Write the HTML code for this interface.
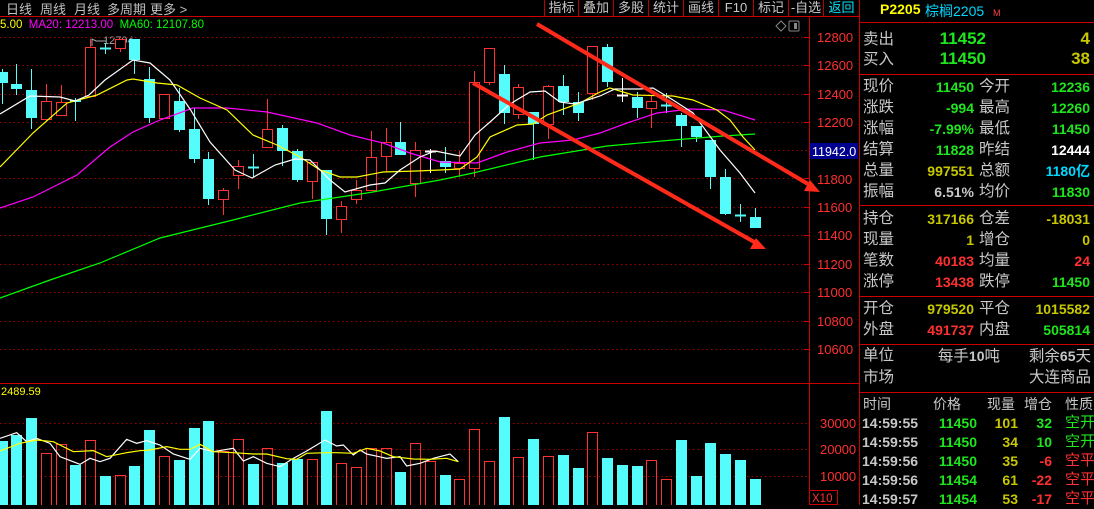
<!DOCTYPE html>
<html><head><meta charset="utf-8">
<style>
*{margin:0;padding:0;box-sizing:border-box}
body{width:1094px;height:505px;background:#000;overflow:hidden;position:relative;font-family:"Liberation Sans","Noto Sans CJK SC",sans-serif;color:#c8c8c8}
.a{position:absolute;white-space:nowrap}
.m{font-size:13px;color:#c0c0c0;top:-1px}
.tab{position:absolute;top:0;height:16px;border-left:1px solid #b00;font-size:13px;line-height:15px;text-align:center;color:#c8c8c8}
.lbl{position:absolute;left:863px;font-size:15.5px;color:#c8c8c8;line-height:20px}
.lbl2{position:absolute;left:979px;font-size:15.5px;color:#c8c8c8;line-height:20px}
.v{position:absolute;font-size:14px;font-weight:bold;line-height:20px;text-align:right}
.hl{position:absolute;left:859px;width:235px;height:1px;background:#c00}
.g{color:#1ee61e}.y{color:#c8c800}.r{color:#ff3030}.w{color:#fff}.c{color:#00d8ff}.gr{color:#c8c8c8}
</style></head><body>
<div class="a m" style="left:6px">日线</div>
<div class="a m" style="left:40px">周线</div>
<div class="a m" style="left:74px">月线</div>
<div class="a m" style="left:107px">多周期</div>
<div class="a m" style="left:150px">更多 &gt;</div>
<div class="tab" style="left:544px;width:34px">指标</div>
<div class="tab" style="left:578px;width:35px">叠加</div>
<div class="tab" style="left:613px;width:35px">多股</div>
<div class="tab" style="left:648px;width:35px">统计</div>
<div class="tab" style="left:683px;width:35px">画线</div>
<div class="tab" style="left:718px;width:35px">F10</div>
<div class="tab" style="left:753px;width:35px">标记</div>
<div class="tab" style="left:788px;width:35px">-自选</div>
<div class="tab" style="left:823px;width:36px;color:#00e8ff">返回</div>
<div class="a" style="left:0;top:16px;width:859px;height:1px;background:#c00"></div>
<div class="a" style="left:0;top:17px;font-size:11.5px;line-height:16px"><span style="color:#ff0">5.00</span>&nbsp; <span style="color:#f0f">MA20: 12213.00</span>&nbsp; <span style="color:#0f0">MA60: 12107.80</span></div>
<div class="a" style="left:103px;top:35px;font-size:11px;color:#aaa">12794</div>

<svg class="a" style="left:0;top:0" width="860" height="505">
<g stroke="#a00000" stroke-dasharray="1.5,3" stroke-width="1">
<line x1="0" x2="809" y1="37.5" y2="37.5"/><line x1="0" x2="809" y1="65.5" y2="65.5"/><line x1="0" x2="809" y1="94.5" y2="94.5"/><line x1="0" x2="809" y1="122.5" y2="122.5"/><line x1="0" x2="809" y1="150.5" y2="150.5"/><line x1="0" x2="809" y1="178.5" y2="178.5"/><line x1="0" x2="809" y1="207.5" y2="207.5"/><line x1="0" x2="809" y1="235.5" y2="235.5"/><line x1="0" x2="809" y1="264.5" y2="264.5"/><line x1="0" x2="809" y1="292.5" y2="292.5"/><line x1="0" x2="809" y1="321.5" y2="321.5"/><line x1="0" x2="809" y1="349.5" y2="349.5"/>
<line x1="0" x2="809" y1="423.5" y2="423.5"/><line x1="0" x2="809" y1="449.5" y2="449.5"/><line x1="0" x2="809" y1="476.5" y2="476.5"/>
</g>
<line x1="809.5" y1="17" x2="809.5" y2="505" stroke="#c00"/>
<line x1="0" y1="383.5" x2="859" y2="383.5" stroke="#c00"/>
<line x1="859.5" y1="0" x2="859.5" y2="505" stroke="#c00"/>
<g stroke="#c00"><line x1="804" x2="809" y1="37.5" y2="37.5"/><line x1="804" x2="809" y1="65.5" y2="65.5"/><line x1="804" x2="809" y1="94.5" y2="94.5"/><line x1="804" x2="809" y1="122.5" y2="122.5"/><line x1="804" x2="809" y1="178.5" y2="178.5"/><line x1="804" x2="809" y1="207.5" y2="207.5"/><line x1="804" x2="809" y1="235.5" y2="235.5"/><line x1="804" x2="809" y1="264.5" y2="264.5"/><line x1="804" x2="809" y1="292.5" y2="292.5"/><line x1="804" x2="809" y1="321.5" y2="321.5"/><line x1="804" x2="809" y1="349.5" y2="349.5"/></g>
<g fill="#ff3030" font-size="13" font-family="Liberation Sans">
<text x="817" y="42">12800</text><text x="817" y="70">12600</text><text x="817" y="99">12400</text><text x="817" y="127">12200</text><text x="817" y="184">11800</text><text x="817" y="212">11600</text><text x="817" y="240">11400</text><text x="817" y="269">11200</text><text x="817" y="297">11000</text><text x="817" y="326">10800</text><text x="817" y="354">10600</text>
<text x="820" y="428">30000</text><text x="820" y="454">20000</text><text x="820" y="481">10000</text>
</g>
<rect x="810" y="143" width="48" height="16" fill="#000090"/>
<text x="812" y="156" fill="#fff" font-size="12.5" font-family="Liberation Sans">11942.0</text>
<rect x="809.5" y="490.5" width="28" height="14" fill="none" stroke="#c00"/>
<text x="812" y="502" fill="#ff3030" font-size="11.5" font-family="Liberation Sans">X10</text>
<text x="1" y="395" fill="#ff0" font-size="11" font-family="Liberation Sans">2489.59</text>
<path d="M776 26l5-5 5 5-5 5z" fill="none" stroke="#888"/>
<rect x="789" y="21" width="10" height="10" rx="1" fill="none" stroke="#888"/><rect x="794" y="23" width="3" height="6" fill="#888"/>
<path d="M92 46v-7l4 2h10" fill="none" stroke="#aaa"/>
<g id="cand"></g>
<g fill="none" stroke-width="1.2" vector-effect="non-scaling-stroke">
<polyline stroke="#00ff00" points="0,298 50,280 100,263 160,238 233,220 300,203 367,193 440,180 473,173 540,157 607,146 673,140 723,136 755,134"/>
<polyline stroke="#ff00ff" points="0,208 33,197 77,175 110,147 133,132 160,120 193,108 227,108 267,112 317,123 350,135 383,143 410,153 440,162 477,163 507,152 540,143 573,140 600,133 627,123 657,113 690,109 723,110 755,120"/>
<polyline stroke="#ffff00" points="0,167 33,133 67,103 97,95 127,80 133,79 157,83 177,85 200,98 227,110 253,135 277,145 300,157 320,170 340,177 357,177 383,172 417,171 440,170 460,169 477,157 490,137 517,125 533,124 547,115 580,103 600,92 610,88 633,95 673,96 693,100 717,110 730,120 743,137 755,150"/>
<polyline stroke="#ffffff" points="0,114 30,96 60,97 75,101 89,95 105,80 133,60 150,63 170,80 190,109 210,142 235,170 252,178 275,165 295,159 310,160 330,180 345,192 370,185 385,183 400,170 420,157 435,151 440,152 460,156 475,135 490,122 510,104 530,92 545,91 560,102 575,104 600,96 615,89 640,89 653,88 673,100 693,113 720,150 740,173 755,193"/>
</g>
<g transform="translate(0,380) scale(0.33333)" fill="none" stroke-width="1.2">
<polyline vector-effect="non-scaling-stroke" stroke="#fff" points="0,175 50,158 80,185 110,175 150,190 180,230 240,253 270,235 300,245 330,235 380,178 410,190 440,182 480,195 520,222 570,238 600,205 640,215 700,205 730,243 760,230 800,250 840,260 880,235 920,213 975,180 1010,198 1030,195 1060,225 1080,210 1100,222 1160,235 1200,230 1220,258 1260,250 1300,235 1350,222 1375,245"/>
<polyline vector-effect="non-scaling-stroke" stroke="#ff0" points="0,213 60,190 110,180 160,185 220,215 280,212 320,230 380,218 420,212 450,210 500,200 540,208 570,208 600,193 640,215 700,218 760,222 800,222 860,236 890,238 920,220 980,218 1010,218 1060,220 1100,205 1140,213 1180,230 1240,237 1290,238 1340,235 1375,245"/>
</g>
<g stroke="#ff2a1a" stroke-width="4" stroke-linecap="butt">
<line x1="537" y1="24" x2="808" y2="184"/>
<line x1="473" y1="83" x2="756" y2="243"/>
</g>
<path d="M820 192l-16-1 6-11z" fill="#ff2a1a"/>
<path d="M766 249l-16 0 6-11z" fill="#ff2a1a"/>
</svg>

<div class="a" style="left:880px;top:1px;font-size:14px;font-weight:bold;color:#ff0">P2205</div>
<div class="a" style="left:925px;top:1px;font-size:14px;color:#00d8ff">棕榈2205</div>
<div class="a" style="left:993px;top:8px;font-size:9px;color:#ff4040">M</div>
<div class="hl" style="top:22px"></div>
<div class="lbl" style="top:30px">卖出</div><div class="v g" style="top:29px;right:108px;font-size:17px">11452</div><div class="v y" style="top:29px;right:4px;font-size:17px">4</div>
<div class="lbl" style="top:50px">买入</div><div class="v g" style="top:49px;right:108px;font-size:17px">11450</div><div class="v y" style="top:49px;right:4px;font-size:17px">38</div>
<div class="hl" style="top:74px"></div>
<div id="rows"></div>
<div class="hl" style="top:205px"></div>
<div class="hl" style="top:296px"></div>
<div class="hl" style="top:344px"></div>
<div class="lbl" style="top:346px">单位</div><div class="a" style="right:94px;top:346px;font-size:15.5px;line-height:20px">每手<b style="font-size:14px">10</b>吨</div><div class="a" style="right:3px;top:346px;font-size:15.5px;line-height:20px">剩余<b style="font-size:14px">65</b>天</div>
<div class="lbl" style="top:368px">市场</div><div class="a" style="right:3px;top:368px;font-size:15.5px;line-height:20px">大连商品</div>
<div class="hl" style="top:392px"></div>
<div class="a" style="left:863px;top:394px;font-size:14px">时间</div>
<div class="a" style="left:933px;top:394px;font-size:14px">价格</div>
<div class="a" style="left:987px;top:394px;font-size:14px">现量</div>
<div class="a" style="left:1024px;top:394px;font-size:14px">增仓</div>
<div class="a" style="left:1065px;top:394px;font-size:14px">性质</div>
<div id="trades"></div>

<script>
var cs=[
['c',72,83,69,104],['c',84,89,64,95],['c',90,118,69,129],['r',101,119,84,121],['r',102,115,85,115],['c',100,102,98,121],
['r',47,96,39,96],['c',48,48,43,54],['r',39,48,39,52],['c',39,60,39,74],['c',79,118,67,123],['r',94,118,94,118],
['c',101,130,88,132],['c',129,159,108,163],['c',159,199,152,205],['r',190,199,188,215],['r',166,175,160,189],['c',167,167,154,177],
['r',129,147,99,147],['c',128,151,125,166],['c',151,180,149,182],['r',162,181,162,199],['c',170,219,170,235],['r',206,219,201,233],
['r',190,199,180,204],['r',157,190,131,190],['r',142,156,128,172],['c',142,155,122,155],['r',150,183,142,197],['w',151,151,149,173],
['c',161,167,147,173],['r',163,168,151,177],['r',82,168,71,177],['r',48,82,48,85],['c',74,113,65,124],['r',87,114,84,119],
['c',112,124,112,160],['r',86,124,85,139],['c',86,102,75,115],['c',102,113,92,121],['r',46,93,46,100],['c',47,82,44,87],
['w',95,95,78,102],['c',97,108,92,118],['r',101,108,95,128],['c',105,105,93,113],['c',115,126,113,147],['c',126,137,126,142],
['c',140,177,140,189],['c',177,214,169,215],['c',215,215,204,222],['c',217,228,208,228]];
var vt=[183,165,113,219,192,255,180,288,285,258,150,228,240,144,123,213,177,252,203,250,237,237,93,250,262,204,205,277,190,244,286,298,148,244,111,232,177,228,225,264,157,234,255,258,240,298,180,288,189,222,240,297];
var vc=['c','c','c','r','r','c','r','c','r','c','c','r','c','c','c','r','r','c','r','c','c','r','c','r','r','r','r','c','r','r','c','r','r','r','c','r','c','r','c','c','r','c','c','c','r','r','c','c','c','c','c','c'];
var s='';
for(var i=0;i<cs.length;i++){var d=cs[i],x=Math.round(1.5+14.77*i),col=d[0]=='r'?'#ff3232':(d[0]=='w'?'#fff':'#54fcfc');
 var xl=x-5;
 if(d[0]=='r'){s+='<line x1="'+(x+.5)+'" x2="'+(x+.5)+'" y1="'+d[3]+'" y2="'+d[1]+'" stroke="'+col+'"/><line x1="'+(x+.5)+'" x2="'+(x+.5)+'" y1="'+d[2]+'" y2="'+d[4]+'" stroke="'+col+'"/><rect x="'+(xl+.5)+'" y="'+(d[1]+.5)+'" width="10" height="'+Math.max(1,d[2]-d[1])+'" fill="#000" stroke="'+col+'"/>';}
 else{s+='<line x1="'+(x+.5)+'" x2="'+(x+.5)+'" y1="'+d[3]+'" y2="'+d[4]+'" stroke="'+col+'"/>';
  if(d[2]-d[1]<2)s+='<line x1="'+xl+'" x2="'+(xl+11)+'" y1="'+(d[1]+.5)+'" y2="'+(d[1]+.5)+'" stroke="'+col+'" stroke-width="2"/>';
  else s+='<rect x="'+xl+'" y="'+d[1]+'" width="11" height="'+(d[2]-d[1])+'" fill="'+col+'"/>';}
 var t=Math.round(380+vt[i]/3);
 if(vc[i]=='r')s+='<rect x="'+(xl+.5)+'" y="'+(t+.5)+'" width="10" height="'+(505-t)+'" fill="none" stroke="#ff3232"/>';
 else s+='<rect x="'+xl+'" y="'+t+'" width="11" height="'+(505-t)+'" fill="#54fcfc"/>';
}
document.getElementById('cand').innerHTML=s;
var rows=[[77,'现价','11450','g','今开','12236','g'],[98,'涨跌','-994','g','最高','12260','g'],[119,'涨幅','-7.99%','g','最低','11450','g'],[140,'结算','11828','g','昨结','12444','w'],[161,'总量','997551','y','总额','1180亿','c'],[182,'振幅','6.51%','gr','均价','11830','g'],
[209,'持仓','317166','y','仓差','-18031','y'],[230,'现量','1','y','增仓','0','y'],[251,'笔数','40183','r','均量','24','r'],[272,'涨停','13438','r','跌停','11450','g'],[299,'开仓','979520','y','平仓','1015582','y'],[320,'外盘','491737','r','内盘','505814','g']];
var h='';rows.forEach(function(r){h+='<div class="lbl" style="top:'+r[0]+'px">'+r[1]+'</div><div class="v '+r[3]+'" style="top:'+r[0]+'px;right:120px">'+r[2]+'</div><div class="lbl2" style="top:'+r[0]+'px">'+r[4]+'</div><div class="v '+r[6]+'" style="top:'+r[0]+'px;right:4px">'+r[5]+'</div>';});
document.getElementById('rows').innerHTML=h;
var tr=[['14:59:55','11450','101','32','g','空开','g'],['14:59:55','11450','34','10','g','空开','g'],['14:59:56','11450','35','-6','r','空平','r'],['14:59:56','11454','61','-22','r','空平','r'],['14:59:57','11454','53','-17','r','空平','r']];
h='';tr.forEach(function(r,k){var y=413+k*19;h+='<div class="v gr" style="top:'+y+'px;left:862px;text-align:left">'+r[0]+'</div><div class="v g" style="top:'+y+'px;right:117px">'+r[1]+'</div><div class="v y" style="top:'+y+'px;right:76px">'+r[2]+'</div><div class="v '+r[4]+'" style="top:'+y+'px;right:42px">'+r[3]+'</div><div class="a '+r[6]+'" style="top:'+y+'px;left:1065px;font-size:15px;line-height:20px">'+r[5]+'</div>';});
document.getElementById('trades').innerHTML=h;
</script>
</body></html>
